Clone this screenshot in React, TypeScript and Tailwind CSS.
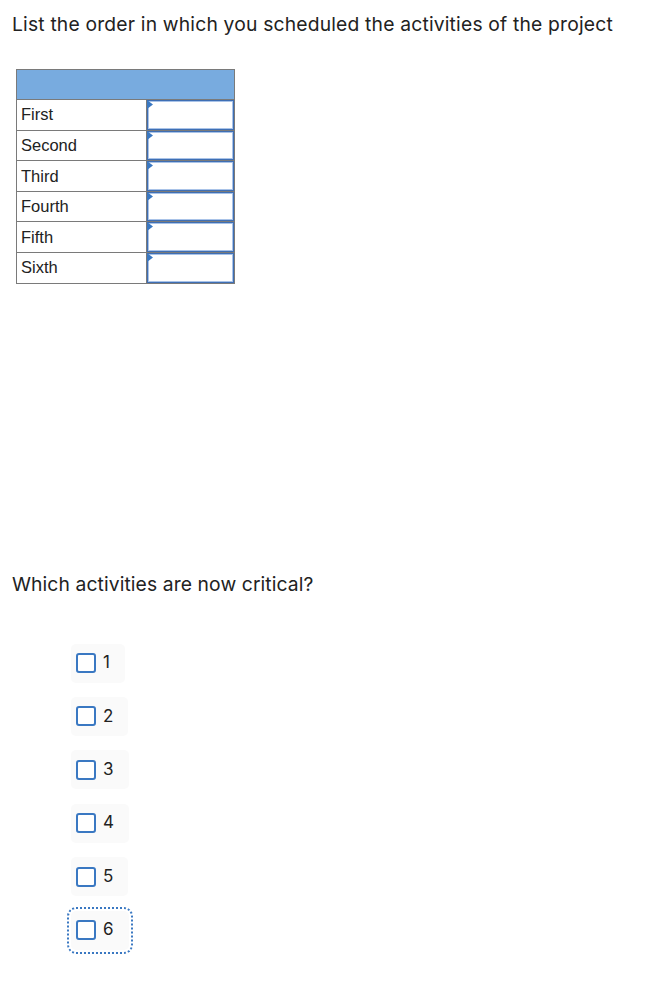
import { useState } from "react";

const ROWS = ["First", "Second", "Third", "Fourth", "Fifth", "Sixth"];
const OPTIONS = ["1", "2", "3", "4", "5", "6"];

function OrderCell() {
  return (
    <td className="relative h-[30.6px] w-[88px] border border-[#7a7a7a] p-0">
      <div className="absolute inset-0 border border-[#3f6fb4] bg-white shadow-[inset_0_0_0_1px_#a9c3e8]" />
      {/* little blue marker in the corner */}
      <svg className="absolute left-0 top-0" width="6" height="9" viewBox="0 0 6 9">
        <path d="M0 0 L6 4.5 L0 9 Z" fill="#3a78c2" />
      </svg>
    </td>
  );
}

export default function App() {
  const [checked, setChecked] = useState<Record<string, boolean>>({});

  return (
    <div className="min-h-[1000px] bg-white px-3 pt-[12px] text-[#222] [font-family:Inter,'Open_Sans',sans-serif]">
      <p className="text-[19.3px] leading-6 tracking-[0.18px]">List the order in which you scheduled the activities of the project</p>

      <table className="ml-1 mt-[33px] border-collapse text-[16.5px] text-[#222] [font-family:'Liberation_Sans',Arial,sans-serif]">
        <thead>
          <tr>
            <th colSpan={2} className="h-[30px] border border-[#7a7a7a] bg-[#78abdf] p-0" />
          </tr>
        </thead>
        <tbody>
          {ROWS.map((r) => (
            <tr key={r}>
              <td className="h-[30.6px] w-[130px] border border-[#7a7a7a] px-1 py-0 text-left align-middle">{r}</td>
              <OrderCell />
            </tr>
          ))}
        </tbody>
      </table>

      <p className="mt-[288px] text-[19.3px] leading-6 tracking-[0.1px]">Which activities are now critical?</p>

      <div className="mt-[48px] flex flex-col items-start gap-[14.4px] pl-[59px]">
        {OPTIONS.map((o) => (
          <label
            key={o}
            className={`flex h-[39px] cursor-pointer items-center gap-[7px] rounded-[5px] bg-[#fafafa] pl-[5px] pr-[15px] text-[17px] ${
              o === "6" ? "outline-2 outline-offset-2 outline-[#3a78c2] outline-dotted" : ""
            }`}
          >
            <input
              type="checkbox"
              className="sr-only"
              checked={!!checked[o]}
              onChange={() => setChecked((c) => ({ ...c, [o]: !c[o] }))}
            />
            <span className="h-[20px] w-[20px] rounded-[3px] border-2 border-[#3a78c2] bg-white" />
            <span>{o}</span>
          </label>
        ))}
      </div>
    </div>
  );
}
